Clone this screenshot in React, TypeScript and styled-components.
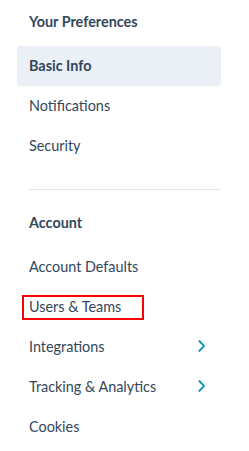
import React, { FC } from 'react';
import styled, { createGlobalStyle } from 'styled-components';

const GlobalStyle = createGlobalStyle`
  html, body {
    margin: 0;
    padding: 0;
    background: #ffffff;
  }
  body {
    font-family: Lato, "Open Sans", sans-serif;
    -webkit-font-smoothing: antialiased;
  }
`;

const Sidebar = styled.nav`
  width: 204px;
  margin-left: 17px;
  padding-top: 2px;
  display: flex;
  flex-direction: column;
`;

const SectionTitle = styled.h3`
  margin: 0 0 4px 0;
  height: 40px;
  padding: 0 12px 2px;
  box-sizing: border-box;
  display: flex;
  align-items: center;
  font-size: 14.4px;
  font-weight: 700;
  color: #33475b;
`;

const Item = styled.a<{ $active?: boolean }>`
  box-sizing: border-box;
  height: 40px;
  padding: 0 12px 2px;
  display: flex;
  align-items: center;
  justify-content: space-between;
  border-radius: 3px;
  font-size: 14.4px;
  font-weight: ${(p) => (p.$active ? 700 : 400)};
  color: #33475b;
  background: ${(p) => (p.$active ? '#eaf0f6' : 'transparent')};
  text-decoration: none;
  cursor: pointer;
`;

const Label = styled.span<{ $marked?: boolean }>`
  ${(p) =>
    p.$marked &&
    `
    box-sizing: border-box;
    display: flex;
    align-items: center;
    width: 122px;
    height: 25px;
    margin-left: -7px;
    margin-top: 2px;
    padding-left: 5px;
    padding-bottom: 2px;
    border: 2px solid #ff0000;
  `}
`;

const Divider = styled.hr`
  border: none;
  height: 1px;
  background: #dfe3eb;
  margin: 23px 0 13px 12px;
`;

const Chevron = styled.svg`
  width: 8px;
  height: 12px;
  margin-right: 3px;
`;

const ChevronIcon: FC = () => (
  <Chevron viewBox="0 0 8 12" fill="none">
    <path d="M1.5 1.2 L6 6 L1.5 10.8" stroke="#0091ae" strokeWidth="1.8" strokeLinecap="square" />
  </Chevron>
);

type NavItem = { label: string; active?: boolean; marked?: boolean; sub?: boolean };

const preferences: NavItem[] = [
  { label: 'Basic Info', active: true },
  { label: 'Notifications' },
  { label: 'Security' },
];

const account: NavItem[] = [
  { label: 'Account Defaults' },
  { label: 'Users & Teams', marked: true },
  { label: 'Integrations', sub: true },
  { label: 'Tracking & Analytics', sub: true },
  { label: 'Cookies' },
];

const renderItems = (items: NavItem[]) =>
  items.map((item) => (
    <Item key={item.label} $active={item.active}>
      <Label $marked={item.marked}>{item.label}</Label>
      {item.sub && <ChevronIcon />}
    </Item>
  ));

const App: FC = () => (
  <>
    <GlobalStyle />
    <Sidebar>
      <SectionTitle>Your Preferences</SectionTitle>
      {renderItems(preferences)}
      <Divider />
      <SectionTitle>Account</SectionTitle>
      {renderItems(account)}
    </Sidebar>
  </>
);

export default App;
